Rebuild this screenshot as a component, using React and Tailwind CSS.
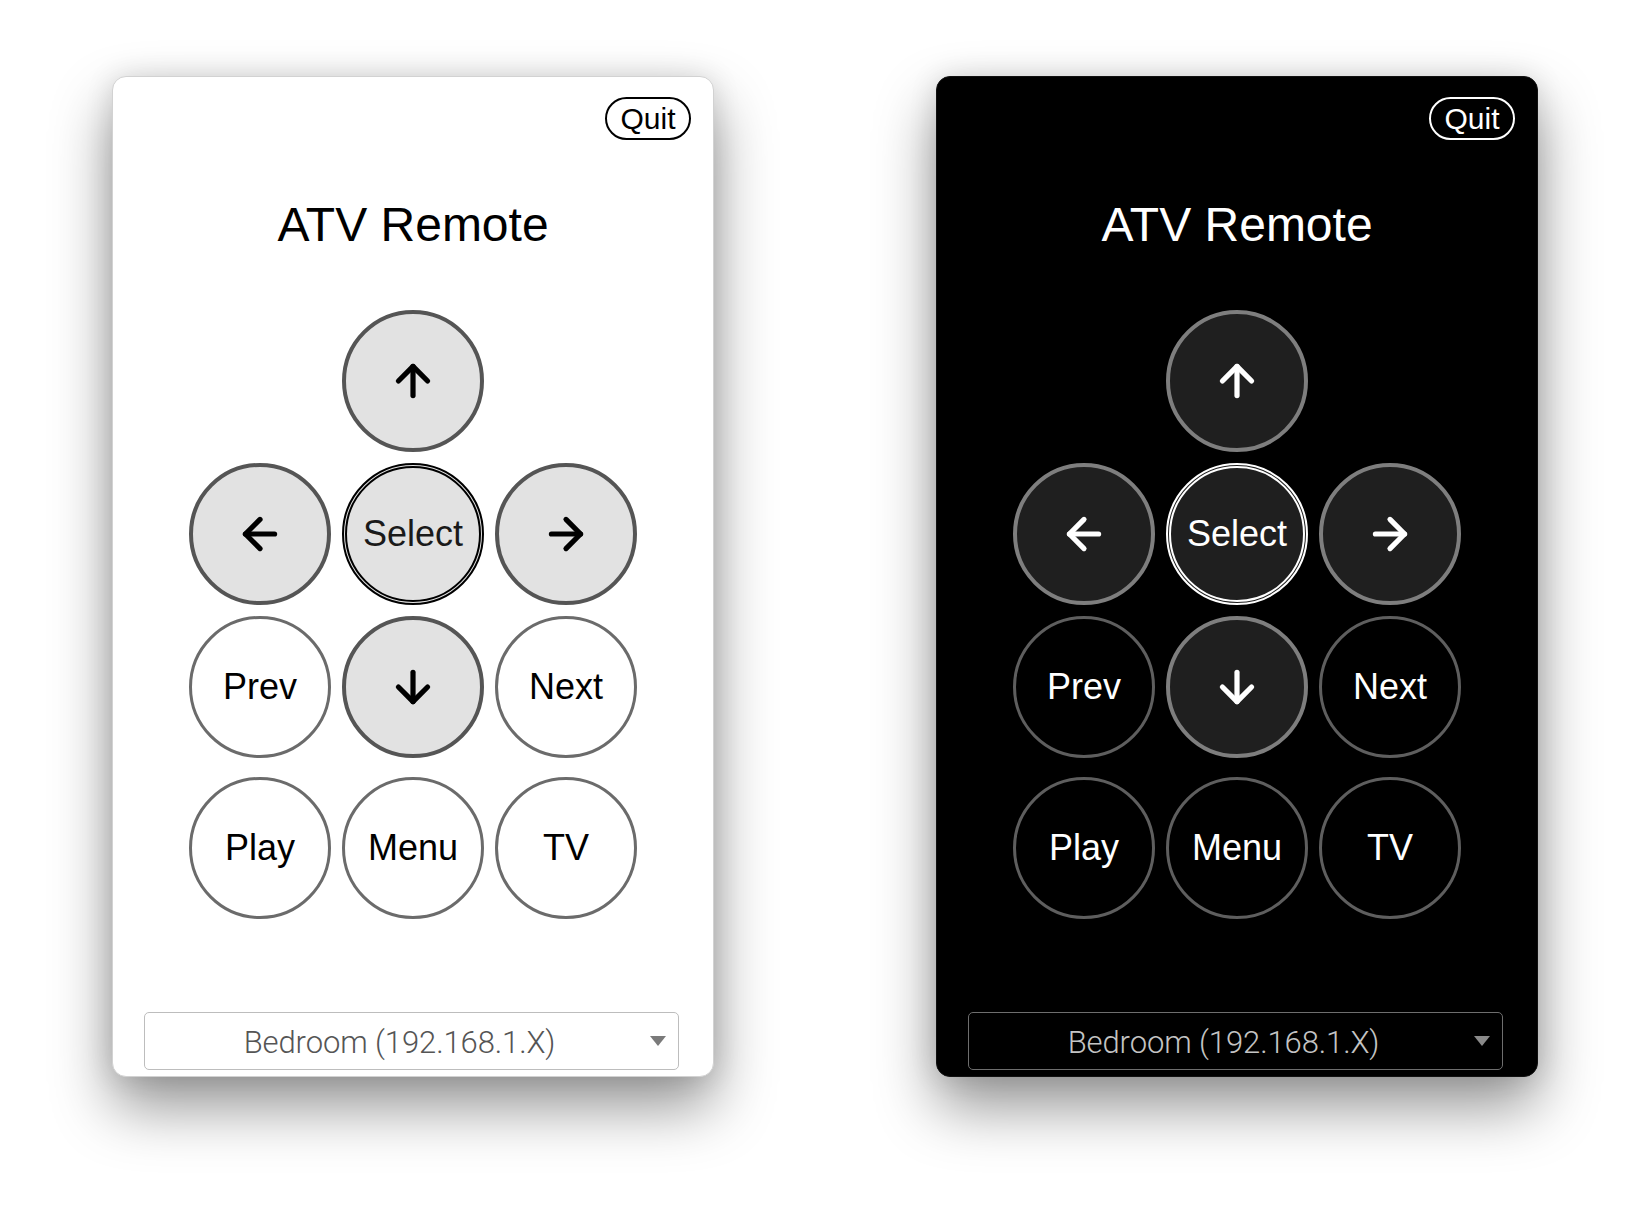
import React from 'react'
import { ArrowUp, ArrowDown, ArrowLeft, ArrowRight } from 'lucide-react'

// two copies of the same remote: light and dark theme
const themes = {
    light: {
        card: 'bg-white border border-[#d2d2d2] text-black',
        quit: 'border-2 border-black text-black',
        dpad: 'bg-[#e2e2e2] border-4 border-[#555555] text-black',
        select: 'bg-[#e2e2e2] border-[5px] border-double border-black text-[#1a1a1a]',
        plain: 'bg-white border-[3px] border-[#6b6b6b] text-black',
        drop: 'bg-white border-[1.5px] border-[#bdbdbd] text-[#555555]',
        caret: 'border-t-[#7a7a7a]',
    },
    dark: {
        card: 'bg-black border border-[#111111] text-white',
        quit: 'border-2 border-white text-white',
        dpad: 'bg-[#1f1f1f] border-4 border-[#7e7e7e] text-white',
        select: 'bg-[#1f1f1f] border-[5px] border-double border-white text-white',
        plain: 'bg-black border-[3px] border-[#5e5e5e] text-white',
        drop: 'bg-black border-[1.5px] border-[#6e6e6e] text-[#c4c4c4]',
        caret: 'border-t-[#8a8a8a]',
    },
}

const RoundButton = ({ kind, t, children }) => (
    <button
        className={`w-[142px] h-[142px] rounded-full flex items-center justify-center text-[36px] leading-none ${t[kind]}`}
    >
        {children}
    </button>
)

const arrow = { size: 50, strokeWidth: 2.5 }

const Remote = ({ theme }) => {
    const t = themes[theme]
    return (
        <div
            className={`w-[602px] h-[1001px] rounded-[14px] flex flex-col shadow-[0_30px_60px_rgba(0,0,0,0.42),0_0_28px_rgba(0,0,0,0.12)] ${t.card}`}
        >
            <div className="flex justify-end pt-[20px] pr-[22px]">
                <button className={`w-[86px] h-[43px] rounded-full text-[30px] leading-none flex items-center justify-center ${t.quit}`}>
                    Quit
                </button>
            </div>

            <h1 className="mt-[61px] text-center text-[48px] leading-none font-normal">ATV Remote</h1>

            <div className="mt-[61px] flex flex-col items-center">
                <div className="flex gap-[11px]">
                    <div className="w-[142px]" />
                    <RoundButton kind="dpad" t={t}>
                        <ArrowUp {...arrow} />
                    </RoundButton>
                    <div className="w-[142px]" />
                </div>
                <div className="flex gap-[11px] mt-[11px]">
                    <RoundButton kind="dpad" t={t}>
                        <ArrowLeft {...arrow} />
                    </RoundButton>
                    <RoundButton kind="select" t={t}>Select</RoundButton>
                    <RoundButton kind="dpad" t={t}>
                        <ArrowRight {...arrow} />
                    </RoundButton>
                </div>
                <div className="flex gap-[11px] mt-[11px]">
                    <RoundButton kind="plain" t={t}>Prev</RoundButton>
                    <RoundButton kind="dpad" t={t}>
                        <ArrowDown {...arrow} />
                    </RoundButton>
                    <RoundButton kind="plain" t={t}>Next</RoundButton>
                </div>
                <div className="flex gap-[11px] mt-[19px]">
                    <RoundButton kind="plain" t={t}>Play</RoundButton>
                    <RoundButton kind="plain" t={t}>Menu</RoundButton>
                    <RoundButton kind="plain" t={t}>TV</RoundButton>
                </div>
            </div>

            <div
                className={`mt-auto mb-[6px] ml-[31px] mr-[34px] h-[58px] rounded-[5px] flex items-center pl-[12px] pr-[12px] ${t.drop}`}
            >
                <span className="flex-1 pt-[5px] text-center text-[31px] font-light font-['Roboto','Liberation_Sans',sans-serif] tracking-[-0.1px]">
                    Bedroom (192.168.1.X)
                </span>
                <span className={`w-0 h-0 ml-[8px] border-x-[8px] border-x-transparent border-t-[10px] ${t.caret}`} />
            </div>
        </div>
    )
}

export default function App() {
    return (
        <div className="w-[1648px] h-[1224px] bg-white flex font-['Liberation_Sans',Arial,sans-serif]">
            <div className="w-[824px] pl-[112px] pt-[76px]">
                <Remote theme="light" />
            </div>
            <div className="w-[824px] pl-[112px] pt-[76px]">
                <Remote theme="dark" />
            </div>
        </div>
    )
}
